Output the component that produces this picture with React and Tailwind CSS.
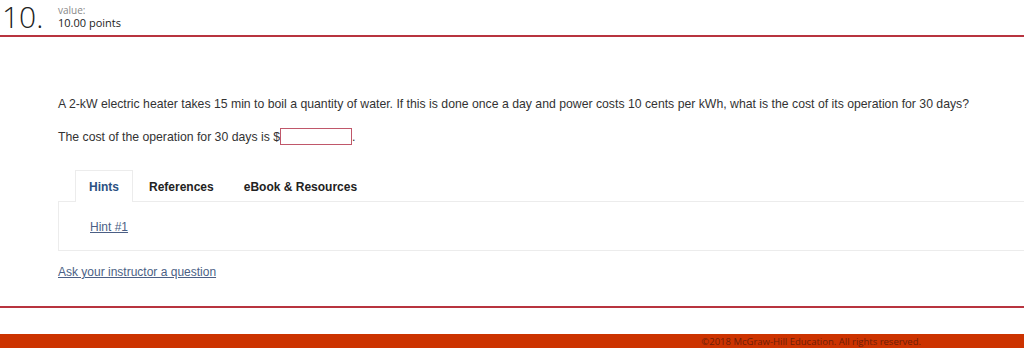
import React from 'react';

const App = () => {
  return (
    <div className="w-[1024px] h-[348px] bg-white overflow-hidden flex flex-col font-['Liberation_Sans',Arial,sans-serif] text-[#333]">
      {/* question header */}
      <div className="h-[37px] shrink-0 flex border-b-2 border-[#b8343f]">
        <div className="w-[58px] pl-[2px] text-[30px] leading-[34px] font-light text-[#222] font-['Open_Sans',sans-serif]">10.</div>
        <div className="pt-[4px] font-['Open_Sans',sans-serif]">
          <div className="text-[10px] leading-[12px] text-[#888]">value:</div>
          <div className="text-[11px] leading-[14px] text-[#222]">10.00 points</div>
        </div>
      </div>

      <div className="shrink-0 pl-[58px] pt-[60px]">
        <p className="text-[12.25px] leading-[14px]">
          A 2-kW electric heater takes 15 min to boil a quantity of water. If this is done once a day and power costs 10 cents per kWh, what is the cost of its operation for 30 days?
        </p>
        <div className="mt-[17px] flex items-center text-[12.25px] leading-[14px]">
          <span>The cost of the operation for 30 days is $</span>
          <input type="text" className="w-[72px] h-[17px] border border-[#c0576a] outline-none bg-white" />
          <span>.</span>
        </div>
      </div>

      {/* tabs */}
      <div className="shrink-0 pl-[58px] mt-[24px]">
        <div className="flex items-end pl-[17px] h-[32px]">
          <div className="w-[58px] h-[32px] border border-b-0 border-[#ececec] bg-white flex items-center justify-center text-[12px] font-bold text-[#2c5182] -mb-px relative">Hints</div>
          <div className="ml-[16px] h-[32px] pt-[3px] flex items-center text-[12px] font-bold text-[#222]">References</div>
          <div className="ml-[30px] h-[32px] pt-[3px] flex items-center text-[12px] font-bold text-[#222]">eBook &amp; Resources</div>
        </div>
        <div className="h-[50px] border border-r-0 border-[#ececec] pl-[31px] pt-[2px] flex items-center">
          <a href="#" className="text-[12px] text-[#4b5f85] underline">Hint #1</a>
        </div>
        <div className="mt-[8px]">
          <a href="#" className="text-[12px] text-[#4b5f85] underline">Ask your instructor a question</a>
        </div>
      </div>

      <div className="shrink-0 mt-[23px] border-b-2 border-[#b8343f]"></div>

      <div className="shrink-0 mt-[26px] h-[15px] bg-[#cc3300] flex justify-end pr-[103px] items-center">
        <span className="text-[9.5px] leading-[14px] text-[#6e1f08] font-['Open_Sans',sans-serif]">©2018 McGraw-Hill Education. All rights reserved.</span>
      </div>
    </div>
  );
};

export default App;
